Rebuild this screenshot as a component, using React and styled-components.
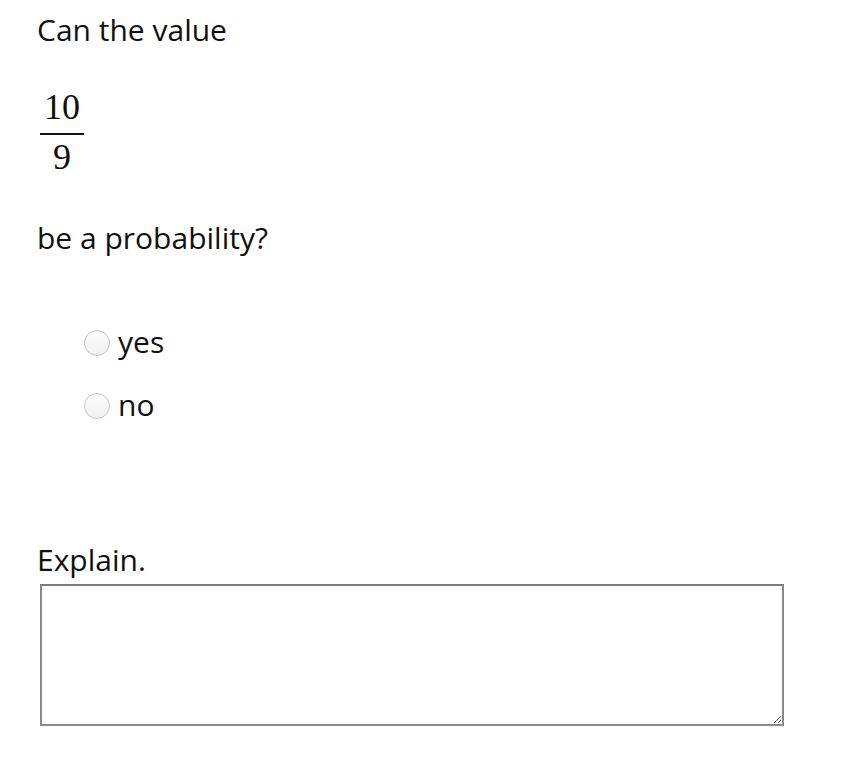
import React from "react";
import styled, { createGlobalStyle } from "styled-components";

const Global = createGlobalStyle`
  html, body { margin: 0; padding: 0; background: #fff; }
  body { font-family: "Open Sans", sans-serif; color: #111; }
`;

const Page = styled.div`
  padding: 10px 0 0 37px;
  width: 748px;
  font-size: 30px;
  line-height: 40px;
`;

const Para = styled.p`
  margin: ${(p) => p.$top || 0}px 0 0;
`;

const Fraction = styled.div`
  display: inline-flex;
  flex-direction: column;
  align-items: center;
  margin: 40px 0 0 3px;
  font-family: "Liberation Serif", "Times New Roman", serif;
  font-size: 36px;
  line-height: 34px;
`;

const Num = styled.span`
  padding: 0 4px 9px;
`;

const Bar = styled.span`
  align-self: stretch;
  height: 2px;
  background: #111;
`;

const Den = styled.span`
  padding-top: 5px;
`;

const Choices = styled.div`
  display: flex;
  flex-direction: column;
  gap: 23px;
  margin: 64px 0 0 47px;
`;

const Choice = styled.label`
  display: flex;
  align-items: center;
  gap: 8px;
  line-height: 40px;
`;

const Radio = styled.span`
  width: 26px;
  height: 26px;
  border-radius: 50%;
  border: 1px solid #c4c4c4;
  background: linear-gradient(#fdfdfd, #f0f0f0);
  box-sizing: border-box;
  margin-top: 2px;
`;

const Textarea = styled.textarea`
  display: block;
  margin: 4px 0 0 3px;
  width: 744px;
  height: 142px;
  box-sizing: border-box;
  border: 2px solid #8a8a8a;
  border-top-color: #7a7a7a;
  resize: vertical;
  font-family: "Open Sans", sans-serif;
`;

export default function App() {
  return (
    <>
      <Global />
      <Page>
        <Para>Can the value</Para>
        <Fraction>
          <Num>10</Num>
          <Bar />
          <Den>9</Den>
        </Fraction>
        <Para $top={44}>be a probability?</Para>
        <Choices>
          <Choice><Radio />yes</Choice>
          <Choice><Radio />no</Choice>
        </Choices>
        <Para $top={115}>Explain.</Para>
        <Textarea />
      </Page>
    </>
  );
}
